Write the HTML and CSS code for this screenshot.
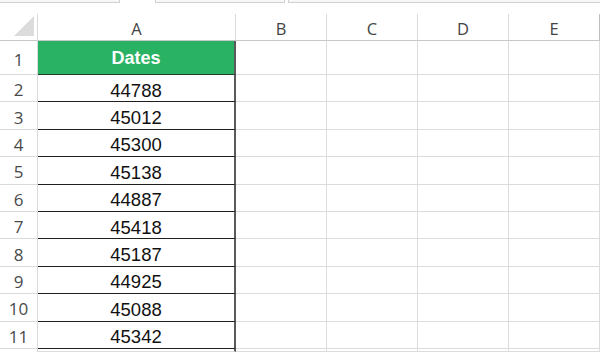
FILE: index.html
```html
<!DOCTYPE html>
<html lang="en">
<head>
    <meta charset="UTF-8">
    <meta name="viewport" content="width=device-width, initial-scale=1.0">
    <title>Dates</title>
    <link rel="stylesheet" href="styles.css">
</head>
<body>
    <div class="tabs">
        <div class="tab tab-first"></div>
        <div class="tab-gap"></div>
        <div class="tab tab-second"></div>
        <div class="tab tab-rest"></div>
    </div>

    <div class="sheet">
        <!-- column headers -->
        <div class="corner"><span class="corner-mark"></span></div>
        <div class="col-head">A</div>
        <div class="col-head">B</div>
        <div class="col-head">C</div>
        <div class="col-head">D</div>
        <div class="col-head col-last">E</div>

        <!-- row 1 -->
        <div class="row-head row-head-first">1</div>
        <div class="cell col-a title">Dates</div>
        <div class="cell"></div>
        <div class="cell"></div>
        <div class="cell"></div>
        <div class="cell"></div>

        <div class="row-head">2</div>
        <div class="cell col-a">44788</div>
        <div class="cell"></div><div class="cell"></div><div class="cell"></div><div class="cell"></div>

        <div class="row-head">3</div>
        <div class="cell col-a">45012</div>
        <div class="cell"></div><div class="cell"></div><div class="cell"></div><div class="cell"></div>

        <div class="row-head">4</div>
        <div class="cell col-a">45300</div>
        <div class="cell"></div><div class="cell"></div><div class="cell"></div><div class="cell"></div>

        <div class="row-head">5</div>
        <div class="cell col-a">45138</div>
        <div class="cell"></div><div class="cell"></div><div class="cell"></div><div class="cell"></div>

        <div class="row-head">6</div>
        <div class="cell col-a">44887</div>
        <div class="cell"></div><div class="cell"></div><div class="cell"></div><div class="cell"></div>

        <div class="row-head">7</div>
        <div class="cell col-a">45418</div>
        <div class="cell"></div><div class="cell"></div><div class="cell"></div><div class="cell"></div>

        <div class="row-head">8</div>
        <div class="cell col-a">45187</div>
        <div class="cell"></div><div class="cell"></div><div class="cell"></div><div class="cell"></div>

        <div class="row-head">9</div>
        <div class="cell col-a">44925</div>
        <div class="cell"></div><div class="cell"></div><div class="cell"></div><div class="cell"></div>

        <div class="row-head">10</div>
        <div class="cell col-a">45088</div>
        <div class="cell"></div><div class="cell"></div><div class="cell"></div><div class="cell"></div>

        <div class="row-head">11</div>
        <div class="cell col-a">45342</div>
        <div class="cell"></div><div class="cell"></div><div class="cell"></div><div class="cell"></div>

        <div class="row-head row-cut"></div>
        <div class="cell col-a-empty"></div>
        <div class="cell"></div><div class="cell"></div><div class="cell"></div><div class="cell"></div>
    </div>
</body>
</html>
```

FILE: styles.css
```css
body {
    margin: 0;
    padding: 0;
    height: 352px;
    background-color: #ffffff;
    overflow: hidden;
}
.tabs {
    display: flex;
    height: 3px;
    margin-bottom: 11px;
}
.tab {
    box-sizing: border-box;
    height: 3px;
    background-color: #f7f7f7;
    border-bottom: 1px solid #d2d2d2;
}
.tab-first {
    width: 120px;
    border-right: 1px solid #d2d2d2;
}
.tab-gap {
    width: 35px;
}
.tab-second {
    width: 130px;
    border-left: 1px solid #d2d2d2;
    border-right: 1px solid #d2d2d2;
}
.tab-rest {
    flex: 1;
    margin-left: 3px;
    border-left: 1px solid #d2d2d2;
}
.sheet {
    display: grid;
    grid-template-columns: 38px 198px 91px 91px 91px 91px;
    grid-template-rows: 27px 34px repeat(10, 27.4px) 3px;
}
.corner {
    box-sizing: border-box;
    display: flex;
    align-items: flex-end;
    justify-content: flex-end;
    padding: 0 3px 4px 0;
    border-right: 1px solid #dadada;
    border-bottom: 1px solid #c8c8c8;
}
.corner-mark {
    width: 20px;
    height: 20px;
    background-color: #dcdcdc;
    clip-path: polygon(100% 0, 100% 100%, 0 100%);
}
.col-head {
    box-sizing: border-box;
    display: flex;
    align-items: center;
    justify-content: center;
    padding-top: 3px;
    border-right: 1px solid #dadada;
    border-bottom: 1px solid #c8c8c8;
    font-family: "Open Sans", "Noto Sans", sans-serif;
    font-size: 16.5px;
    color: #444444;
}
.col-last {
    border-right: 1px solid #c0c0c0;
}
.row-head {
    box-sizing: border-box;
    display: flex;
    align-items: center;
    justify-content: center;
    padding-top: 3px;
    border-right: 1px solid #dadada;
    border-bottom: 1px solid #dadada;
    font-family: "Open Sans", "Noto Sans", sans-serif;
    font-size: 17px;
    color: #4a4a4a;
}
.row-head-first {
    align-items: flex-end;
    padding-bottom: 3px;
}
.row-cut {
    border-bottom: none;
}
.cell {
    box-sizing: border-box;
    border-right: 1px solid #dcdcdc;
    border-bottom: 1px solid #dcdcdc;
}
.col-a {
    display: flex;
    align-items: center;
    justify-content: center;
    padding-top: 5px;
    border-right: 2px solid #5a5a5a;
    border-bottom: 1px solid #1f1f1f;
    font-family: "Liberation Sans", Arial, sans-serif;
    font-size: 18.5px;
    color: #111111;
}
.col-a-empty {
    border-right: 2px solid #5a5a5a;
}
.title {
    padding-top: 2px;
    background-color: #29b263;
    color: #ffffff;
    font-weight: bold;
    font-size: 18px;
    border-bottom: 1px solid #1f3d2a;
}
```
